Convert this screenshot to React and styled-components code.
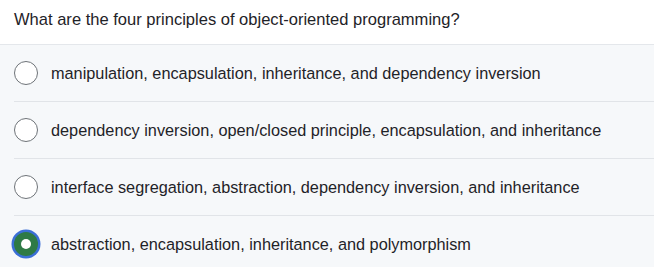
import React, { useState } from "react";
import styled, { createGlobalStyle } from "styled-components";

const Global = createGlobalStyle`
  html, body { margin: 0; padding: 0; background: #ffffff; }
  body { font-family: "Liberation Sans", Arial, sans-serif; color: #1f2328; }
  * { box-sizing: border-box; }
`;

const Wrapper = styled.div`
  width: 654px;
  height: 267px;
  overflow: hidden;
  background: #f6f8fa;
`;

const Question = styled.div`
  height: 45px;
  padding: 0 14px;
  display: flex;
  align-items: center;
  background: #ffffff;
  border-bottom: 1px solid #e4e7eb;
  font-size: 16.55px;
  padding-bottom: 4px;
`;

const List = styled.div`
  display: flex;
  flex-direction: column;
`;

const Row = styled.label`
  display: block;
  padding-left: 14px;
  cursor: pointer;
`;

const RowInner = styled.div`
  height: 57px;
  display: flex;
  align-items: center;
  gap: 13px;
  border-bottom: ${(p) => (p.$last ? "none" : "1px solid #e1e4e8")};
`;

const Radio = styled.span`
  flex: none;
  width: 24px;
  height: 24px;
  border-radius: 50%;
  display: flex;
  align-items: center;
  justify-content: center;
  background: ${(p) => (p.$checked ? "#2e7a45" : "#ffffff")};
  border: ${(p) => (p.$checked ? "none" : "1.5px solid #6e7378")};
  box-shadow: ${(p) => (p.$checked ? "0 0 0 2.5px #3b6fd6" : "none")};
  margin-top: -1px;
`;

const Dot = styled.span`
  width: 10px;
  height: 10px;
  border-radius: 50%;
  background: #ffffff;
`;

const Text = styled.span`
  font-size: 16.3px;
  color: #1f2328;
`;

const options = [
  "manipulation, encapsulation, inheritance, and dependency inversion",
  "dependency inversion, open/closed principle, encapsulation, and inheritance",
  "interface segregation, abstraction, dependency inversion, and inheritance",
  "abstraction, encapsulation, inheritance, and polymorphism",
];

export default function App() {
  const [selected, setSelected] = useState(3);
  return (
    <>
      <Global />
      <Wrapper>
        <Question>What are the four principles of object-oriented programming?</Question>
        <List>
          {options.map((o, i) => (
            <Row key={i} onClick={() => setSelected(i)}>
              <RowInner $last={i === options.length - 1}>
                <Radio $checked={selected === i}>{selected === i && <Dot />}</Radio>
                <Text>{o}</Text>
              </RowInner>
            </Row>
          ))}
        </List>
      </Wrapper>
    </>
  );
}
